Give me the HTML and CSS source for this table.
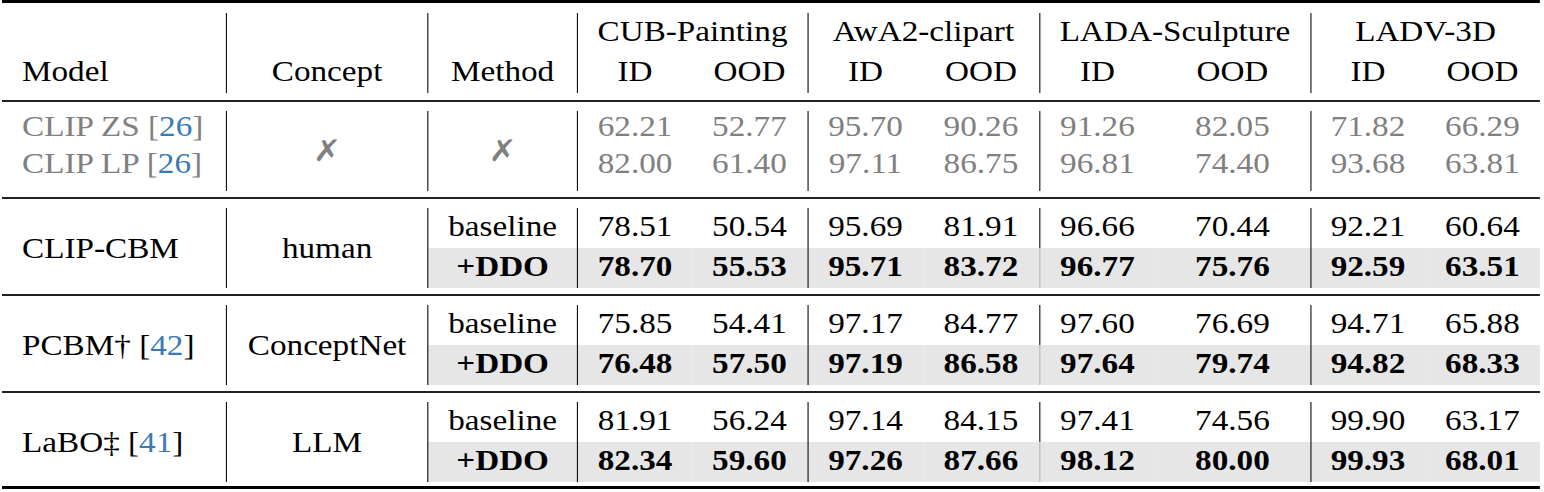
FILE: index.html
```html
<!DOCTYPE html>
<html lang="en">
<head>
<meta charset="utf-8">
<title>Results table</title>
<link rel="stylesheet" href="styles.css">
</head>
<body>
<div class="wrap">
<table class="tbl">
<colgroup>
<col class="c-model"><col class="c-concept"><col class="c-method">
<col class="c-n"><col class="c-n">
<col class="c-m"><col class="c-m">
<col class="c-m"><col class="c-wide">
<col class="c-n"><col class="c-n">
</colgroup>
<tbody>
<tr class="sp top"><td colspan="11"></td></tr>
<tr class="r">
  <td></td><td class="vl"></td><td class="vl"></td>
  <td class="vl" colspan="2">CUB-Painting</td>
  <td class="vl" colspan="2">AwA2-clipart</td>
  <td class="vl" colspan="2">LADA-Sculpture</td>
  <td class="vl" colspan="2">LADV-3D</td>
</tr>
<tr class="r h2">
  <td class="model">Model</td><td class="vl">Concept</td><td class="vl">Method</td>
  <td class="vl">ID</td><td>OOD</td>
  <td class="vl">ID</td><td>OOD</td>
  <td class="vl">ID</td><td>OOD</td>
  <td class="vl">ID</td><td>OOD</td>
</tr>
<tr class="sp s7"><td colspan="11"></td></tr>
<tr class="sp rule"><td colspan="11"></td></tr>

<tr class="r ref ref1">
  <td class="model">CLIP ZS [<span class="cite">26</span>]</td>
  <td class="vl span" rowspan="2"><span class="cross">✗</span></td>
  <td class="vl span" rowspan="2"><span class="cross">✗</span></td>
  <td class="vl">62.21</td><td>52.77</td>
  <td class="vl">95.70</td><td>90.26</td>
  <td class="vl">91.26</td><td>82.05</td>
  <td class="vl">71.82</td><td>66.29</td>
</tr>
<tr class="r ref ref2">
  <td class="model">CLIP LP [<span class="cite">26</span>]</td>
  <td class="vl">82.00</td><td>61.40</td>
  <td class="vl">97.11</td><td>86.75</td>
  <td class="vl">96.81</td><td>74.40</td>
  <td class="vl">93.68</td><td>63.81</td>
</tr>
<tr class="sp"><td colspan="11"></td></tr>
<tr class="sp rule"><td colspan="11"></td></tr>

<tr class="r">
  <td class="model span" rowspan="2">CLIP-CBM</td>
  <td class="vl span" rowspan="2">human</td>
  <td class="vl">baseline</td>
  <td class="vl">78.51</td><td>50.54</td>
  <td class="vl">95.69</td><td>81.91</td>
  <td class="vl">96.66</td><td>70.44</td>
  <td class="vl">92.21</td><td>60.64</td>
</tr>
<tr class="r dd">
  <td class="vl">+DDO</td>
  <td class="vl">78.70</td><td>55.53</td>
  <td class="vl">95.71</td><td>83.72</td>
  <td class="vl fade">96.77</td><td>75.76</td>
  <td class="vl">92.59</td><td>63.51</td>
</tr>
<tr class="sp"><td colspan="11"></td></tr>
<tr class="sp rule"><td colspan="11"></td></tr>

<tr class="r">
  <td class="model span" rowspan="2">PCBM† [<span class="cite">42</span>]</td>
  <td class="vl span" rowspan="2">ConceptNet</td>
  <td class="vl">baseline</td>
  <td class="vl">75.85</td><td>54.41</td>
  <td class="vl">97.17</td><td>84.77</td>
  <td class="vl">97.60</td><td>76.69</td>
  <td class="vl">94.71</td><td>65.88</td>
</tr>
<tr class="r dd">
  <td class="vl">+DDO</td>
  <td class="vl">76.48</td><td>57.50</td>
  <td class="vl">97.19</td><td>86.58</td>
  <td class="vl fade">97.64</td><td>79.74</td>
  <td class="vl">94.82</td><td>68.33</td>
</tr>
<tr class="sp"><td colspan="11"></td></tr>
<tr class="sp rule"><td colspan="11"></td></tr>

<tr class="r">
  <td class="model span" rowspan="2">LaBO‡ [<span class="cite">41</span>]</td>
  <td class="vl span" rowspan="2">LLM</td>
  <td class="vl">baseline</td>
  <td class="vl">81.91</td><td>56.24</td>
  <td class="vl">97.14</td><td>84.15</td>
  <td class="vl">97.41</td><td>74.56</td>
  <td class="vl">99.90</td><td>63.17</td>
</tr>
<tr class="r dd">
  <td class="vl">+DDO</td>
  <td class="vl">82.34</td><td>59.60</td>
  <td class="vl">97.26</td><td>87.66</td>
  <td class="vl fade">98.12</td><td>80.00</td>
  <td class="vl">99.93</td><td>68.01</td>
</tr>
<tr class="sp bottom"><td colspan="11"></td></tr>
</tbody>
</table>
</div>
</body>
</html>
```

FILE: styles.css
```css
html, body {
  margin: 0;
  padding: 0;
  background: #ffffff;
}

body {
  font-family: "Liberation Serif", "Times New Roman", serif;
  color: #000000;
}

/* the reference is rendered slightly stretched horizontally */
.wrap {
  width: 1367.1px;
  margin-left: 2px;
  transform: scaleX(1.125);
  transform-origin: 0 0;
}

.tbl {
  width: 1367.1px;
  table-layout: fixed;
  border-collapse: separate;
  border-spacing: 0;
  font-size: 29.5px;
}

.c-model { width: 199.1px; }
.c-concept { width: 178.7px; }
.c-method { width: 133.3px; }
.c-n { width: 102.2px; }
.c-m { width: 103.1px; }
.c-wide { width: 137.8px; }

.tbl td {
  padding: 0;
  white-space: nowrap;
  text-align: center;
}

/* spacer rows and booktabs-like rules */
.sp td { height: 6px; }
.sp.top td { height: 10px; border-top: 3px solid #000; }
.sp.s7 td { height: 7px; }
.sp.rule td { height: 9px; border-top: 2px solid #222; }
.sp.bottom td { height: 4px; border-bottom: 3px solid #000; }

/* text rows */
.r td {
  height: 36px;
  line-height: 36px;
  padding-bottom: 4px;
  vertical-align: top;
}

.r.h2 td {
  height: 35px;
}

.r.ref1 td { line-height: 30px; }
.r.ref2 td { line-height: 24px; }

.r td.span {
  padding-bottom: 0;
  vertical-align: middle;
  line-height: 36px;
}

.r td.model {
  text-align: left;
  padding-left: 17.8px;
}

.vl { border-left: 1px solid #111; }

.ref td { color: #808080; }
.cite { color: #3a7ab6; }

.cross {
  font-family: "DejaVu Sans", sans-serif;
  font-size: 30px;
  color: #808080;
}

.dd td {
  background: #e6e6e6;
  font-weight: bold;
}

.dd td.fade { border-left-color: #b8b8b8; }
```
